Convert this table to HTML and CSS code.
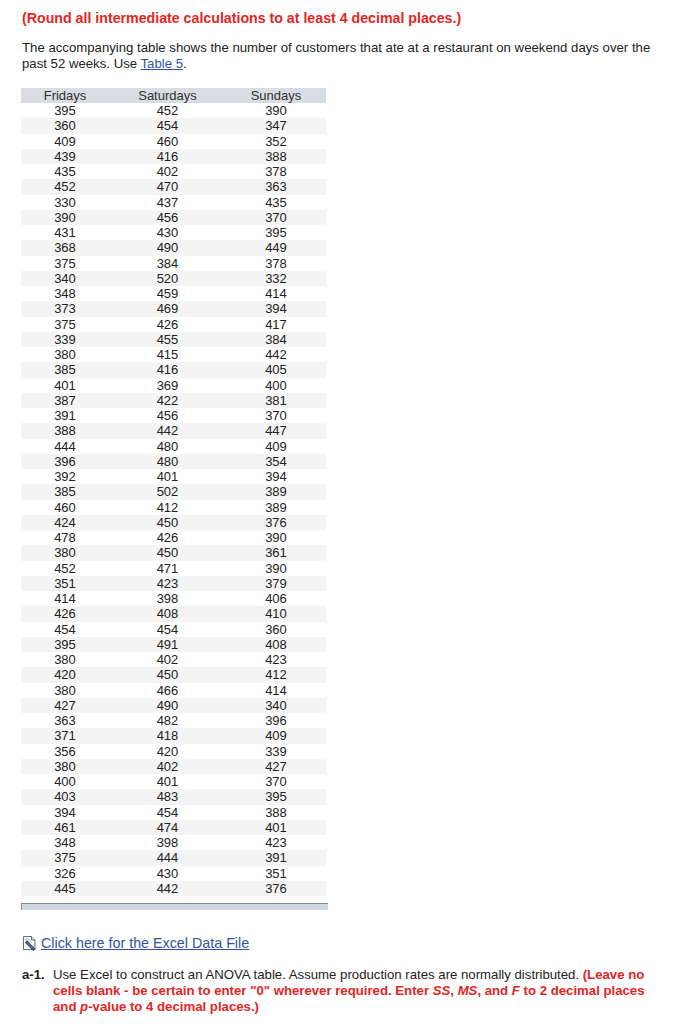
FILE: index.html
```html
<!DOCTYPE html>
<html>
<head>
<meta charset="utf-8">
<link rel="stylesheet" href="styles.css">
</head>
<body>
<p class="note">(Round all intermediate calculations to at least 4 decimal places.)</p>
<p class="intro">The accompanying table shows the number of customers that ate at a restaurant on weekend days over the past 52 weeks. Use <a class="link" href="#">Table 5</a>.</p>
<table class="data">
<thead><tr><th>Fridays</th><th>Saturdays</th><th>Sundays</th></tr></thead>
<tbody>
<tr><td>395</td><td>452</td><td>390</td></tr>
<tr><td>360</td><td>454</td><td>347</td></tr>
<tr><td>409</td><td>460</td><td>352</td></tr>
<tr><td>439</td><td>416</td><td>388</td></tr>
<tr><td>435</td><td>402</td><td>378</td></tr>
<tr><td>452</td><td>470</td><td>363</td></tr>
<tr><td>330</td><td>437</td><td>435</td></tr>
<tr><td>390</td><td>456</td><td>370</td></tr>
<tr><td>431</td><td>430</td><td>395</td></tr>
<tr><td>368</td><td>490</td><td>449</td></tr>
<tr><td>375</td><td>384</td><td>378</td></tr>
<tr><td>340</td><td>520</td><td>332</td></tr>
<tr><td>348</td><td>459</td><td>414</td></tr>
<tr><td>373</td><td>469</td><td>394</td></tr>
<tr><td>375</td><td>426</td><td>417</td></tr>
<tr><td>339</td><td>455</td><td>384</td></tr>
<tr><td>380</td><td>415</td><td>442</td></tr>
<tr><td>385</td><td>416</td><td>405</td></tr>
<tr><td>401</td><td>369</td><td>400</td></tr>
<tr><td>387</td><td>422</td><td>381</td></tr>
<tr><td>391</td><td>456</td><td>370</td></tr>
<tr><td>388</td><td>442</td><td>447</td></tr>
<tr><td>444</td><td>480</td><td>409</td></tr>
<tr><td>396</td><td>480</td><td>354</td></tr>
<tr><td>392</td><td>401</td><td>394</td></tr>
<tr><td>385</td><td>502</td><td>389</td></tr>
<tr><td>460</td><td>412</td><td>389</td></tr>
<tr><td>424</td><td>450</td><td>376</td></tr>
<tr><td>478</td><td>426</td><td>390</td></tr>
<tr><td>380</td><td>450</td><td>361</td></tr>
<tr><td>452</td><td>471</td><td>390</td></tr>
<tr><td>351</td><td>423</td><td>379</td></tr>
<tr><td>414</td><td>398</td><td>406</td></tr>
<tr><td>426</td><td>408</td><td>410</td></tr>
<tr><td>454</td><td>454</td><td>360</td></tr>
<tr><td>395</td><td>491</td><td>408</td></tr>
<tr><td>380</td><td>402</td><td>423</td></tr>
<tr><td>420</td><td>450</td><td>412</td></tr>
<tr><td>380</td><td>466</td><td>414</td></tr>
<tr><td>427</td><td>490</td><td>340</td></tr>
<tr><td>363</td><td>482</td><td>396</td></tr>
<tr><td>371</td><td>418</td><td>409</td></tr>
<tr><td>356</td><td>420</td><td>339</td></tr>
<tr><td>380</td><td>402</td><td>427</td></tr>
<tr><td>400</td><td>401</td><td>370</td></tr>
<tr><td>403</td><td>483</td><td>395</td></tr>
<tr><td>394</td><td>454</td><td>388</td></tr>
<tr><td>461</td><td>474</td><td>401</td></tr>
<tr><td>348</td><td>398</td><td>423</td></tr>
<tr><td>375</td><td>444</td><td>391</td></tr>
<tr><td>326</td><td>430</td><td>351</td></tr>
<tr><td>445</td><td>442</td><td>376</td></tr>
</tbody>
</table>
<div class="scrollbar"></div>
<p class="excel"><svg class="file-icon" width="16" height="16" viewBox="0 0 16 16"><path d="M1.5 1.5h8l3.5 3.5v9.5h-11.5z" fill="#fff" stroke="#6b6b6b"/><path d="M9.5 1.5v3.5h3.5" fill="#dcdcdc" stroke="#6b6b6b"/><path d="M3 4h5M3 6h6M3 8h3" stroke="#b8b8b8"/><path d="M4 6.5l8.5 8.5" stroke="#2b3f66" stroke-width="3"/><path d="M4.5 7l7.5 7.5" stroke="#7b93c2" stroke-width="1"/></svg><a class="link" href="#">Click here for the Excel Data File</a></p>
<div class="question">
<span class="qlabel">a-1.</span>
<p class="qtext">Use Excel to construct an ANOVA table. Assume production rates are normally distributed. <span class="red">(Leave no cells blank - be certain to enter "0" wherever required. Enter <i>SS</i>, <i>MS</i>, and <i>F</i> to 2 decimal places and <i>p</i>-value to 4 decimal places.)</span></p>
</div>
</body>
</html>
```
FILE: styles.css
```css
body {
  margin: 0;
  padding: 10px 16px 0 22px;
  font-family: "Liberation Sans", Arial, sans-serif;
  font-size: 13.2px;
  line-height: 16px;
  color: #222;
  background: #fff;
}
p { margin: 0; }
.note {
  color: #e3261f;
  font-weight: bold;
  font-size: 14.2px;
  margin-bottom: 14px;
}
.intro { margin-bottom: 16px; }
.link {
  color: #2f5597;
  text-decoration: underline;
}
.data {
  border-collapse: collapse;
  width: 305px;
  margin-left: -1px;
  font-size: 13px;
}
.data th {
  background: #d8dce4;
  font-weight: normal;
  height: 15px;
  line-height: 15px;
  padding: 0;
  text-align: center;
  color: #333;
}
.data th:nth-child(1), .data td:nth-child(1) { width: 88px; }
.data th:nth-child(2), .data td:nth-child(2) { width: 117px; }
.data td {
  height: 15.25px;
  line-height: 15px;
  padding: 0;
  text-align: center;
  color: #222;
}
.data tbody tr:nth-child(even) td { background: #f4f4f4; }
.scrollbar {
  margin-top: 7px;
  margin-left: -1px;
  width: 306px;
  height: 6px;
  background: #cfd5e1;
  border-top: 1px solid #8a8a8a;
  border-left: 1px solid #8a8a8a;
}
.excel {
  margin-top: 25px;
  display: flex;
  align-items: center;
  gap: 3px;
  height: 16px;
  font-size: 14.3px;
}
.file-icon { flex: none; }
.question {
  display: flex;
  margin-top: 16px;
}
.qlabel {
  font-weight: bold;
  width: 31px;
  flex: none;
}
.qtext { flex: 1; }
.red {
  color: #e3261f;
  font-weight: bold;
}
```
